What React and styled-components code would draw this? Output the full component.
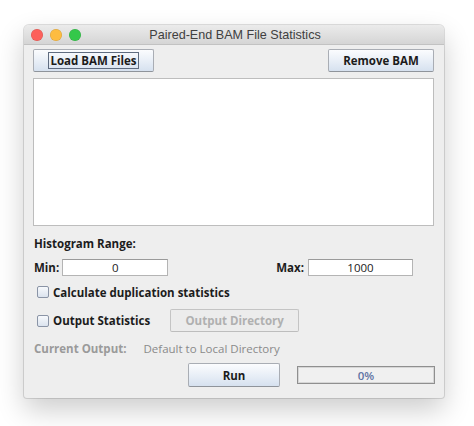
import React, { useState } from 'react';
import styled, { createGlobalStyle } from 'styled-components';

const GlobalStyle = createGlobalStyle`
  html, body {
    margin: 0;
    padding: 0;
    background: #ffffff;
  }
  body {
    font-family: "Open Sans", "DejaVu Sans", sans-serif;
  }
`;

const Page = styled.div`
  width: 474px;
  height: 426px;
  padding: 25px 30px 0 24px;
  box-sizing: border-box;
`;

const Window = styled.div`
  width: 420px;
  height: 373px;
  background: #eeeeee;
  border-radius: 5px 5px 3px 3px;
  box-shadow: 0 12px 28px rgba(0, 0, 0, 0.2), 0 0 0 1px rgba(0, 0, 0, 0.12);
  display: flex;
  flex-direction: column;
  overflow: hidden;
`;

const TitleBar = styled.div`
  height: 20px;
  flex: none;
  position: relative;
  display: flex;
  align-items: center;
  justify-content: center;
  background: linear-gradient(#ebebeb, #d5d5d5);
  border-bottom: 1px solid #c2c2c2;
  box-sizing: border-box;
`;

const Lights = styled.div`
  position: absolute;
  left: 7px;
  top: 4px;
  display: flex;
  gap: 7px;
`;

const Light = styled.span`
  width: 12px;
  height: 12px;
  border-radius: 50%;
  background: ${p => p.color};
  box-shadow: inset 0 0 0 0.5px rgba(0, 0, 0, 0.15);
`;

const Title = styled.div`
  font-family: "Liberation Sans", Arial, sans-serif;
  font-size: 12.6px;
  color: #404040;
  margin-left: 2px;
`;

const Content = styled.div`
  flex: 1;
  display: flex;
  flex-direction: column;
  padding: 4px 10px 0 9px;
`;

const Row = styled.div`
  display: flex;
  align-items: center;
  height: ${p => p.h}px;
  margin-top: ${p => p.mt || 0}px;
`;

const Button = styled.button`
  width: ${p => p.w}px;
  height: ${p => p.h || 23}px;
  padding: 0;
  font-family: "Open Sans", "DejaVu Sans", sans-serif;
  font-weight: bold;
  font-size: 11.5px;
  color: ${p => (p.disabled ? '#b0b0b0' : '#1c1c1c')};
  background: ${p =>
    p.disabled ? '#ececec' : 'linear-gradient(#fbfcfe, #e9eff7 50%, #d6e1ef)'};
  border: 1px solid ${p => (p.disabled ? '#c4c4c4' : '#a9adb4')};
  border-bottom-color: ${p => (p.disabled ? '#bdbdbd' : '#8f949b')};
  border-radius: 2px;
  display: flex;
  align-items: center;
  justify-content: center;
`;

const Focus = styled.span`
  border: 1px solid #5f6c80;
  padding: 0 1px;
  line-height: 15px;
`;

const Spacer = styled.div`
  flex: ${p => (p.w ? 'none' : 1)};
  width: ${p => (p.w ? `${p.w}px` : 'auto')};
`;

const ListBox = styled.div`
  height: 148px;
  margin-top: 6px;
  background: #ffffff;
  border: 1px solid #bdbdbd;
  box-sizing: border-box;
`;

const Label = styled.span`
  font-weight: bold;
  font-size: 11.5px;
  color: ${p => (p.dim ? '#9a9a9a' : '#1c1c1c')};
  margin-left: ${p => p.ml || 0}px;
`;

const Field = styled.div`
  width: ${p => p.w}px;
  height: 17px;
  margin-left: ${p => p.ml || 0}px;
  background: #ffffff;
  border: 1px solid #b4b4b4;
  border-top-color: #9a9a9a;
  box-sizing: border-box;
  font-size: 11.5px;
  color: #222;
  display: flex;
  align-items: center;
  justify-content: center;
`;

const Box = styled.span`
  width: 12px;
  height: 12px;
  margin-left: 4px;
  margin-right: 4px;
  box-sizing: border-box;
  border: 1px solid #8a94a6;
  border-radius: 2px;
  background: linear-gradient(#f7f9fc, #dbe3ee);
`;

const Plain = styled.span`
  font-size: 11.5px;
  color: #8a8a8a;
  margin-left: ${p => p.ml || 0}px;
`;

const Progress = styled.div`
  width: 138px;
  height: 18px;
  margin-left: 17px;
  margin-right: -1px;
  box-sizing: border-box;
  border: 1px solid #8f8f8f;
  box-shadow: inset 0 0 0 1px #d6d6d6;
  background: #f0f0f0;
  font-size: 11.5px;
  font-weight: 600;
  color: #5f74a4;
  display: flex;
  align-items: center;
  justify-content: center;
`;

export default function App() {
  const [dup, setDup] = useState(false);
  const [out, setOut] = useState(false);
  return (
    <>
      <GlobalStyle />
      <Page>
        <Window>
          <TitleBar>
            <Lights>
              <Light color="#fc605b" />
              <Light color="#fdbc40" />
              <Light color="#34c84a" />
            </Lights>
            <Title>Paired-End BAM File Statistics</Title>
          </TitleBar>
          <Content>
            <Row h={23}>
              <Button w={121}>
                <Focus>Load BAM Files</Focus>
              </Button>
              <Spacer />
              <Button w={106}>Remove BAM</Button>
            </Row>
            <ListBox />
            <Row h={16} mt={9}>
              <Label ml={1}>Histogram Range:</Label>
            </Row>
            <Row h={17} mt={8}>
              <Label ml={1}>Min:</Label>
              <Field w={106} ml={3}>0</Field>
              <Spacer />
              <Label>Max:</Label>
              <Field w={105} ml={4}>1000</Field>
              <Spacer w={21} />
            </Row>
            <Row h={16} mt={8} onClick={() => setDup(!dup)}>
              <Box />
              <Label>Calculate duplication statistics</Label>
            </Row>
            <Row h={23} mt={9} onClick={() => setOut(!out)}>
              <Box />
              <Label>Output Statistics</Label>
              <Spacer w={20} />
              <Button w={129} disabled>Output Directory</Button>
            </Row>
            <Row h={16} mt={8}>
              <Label dim ml={1}>Current Output:</Label>
              <Plain ml={17}>Default to Local Directory</Plain>
            </Row>
            <Row h={24} mt={7}>
              <Spacer />
              <Button w={92} h={24}>Run</Button>
              <Progress>0%</Progress>
            </Row>
          </Content>
        </Window>
      </Page>
    </>
  );
}
